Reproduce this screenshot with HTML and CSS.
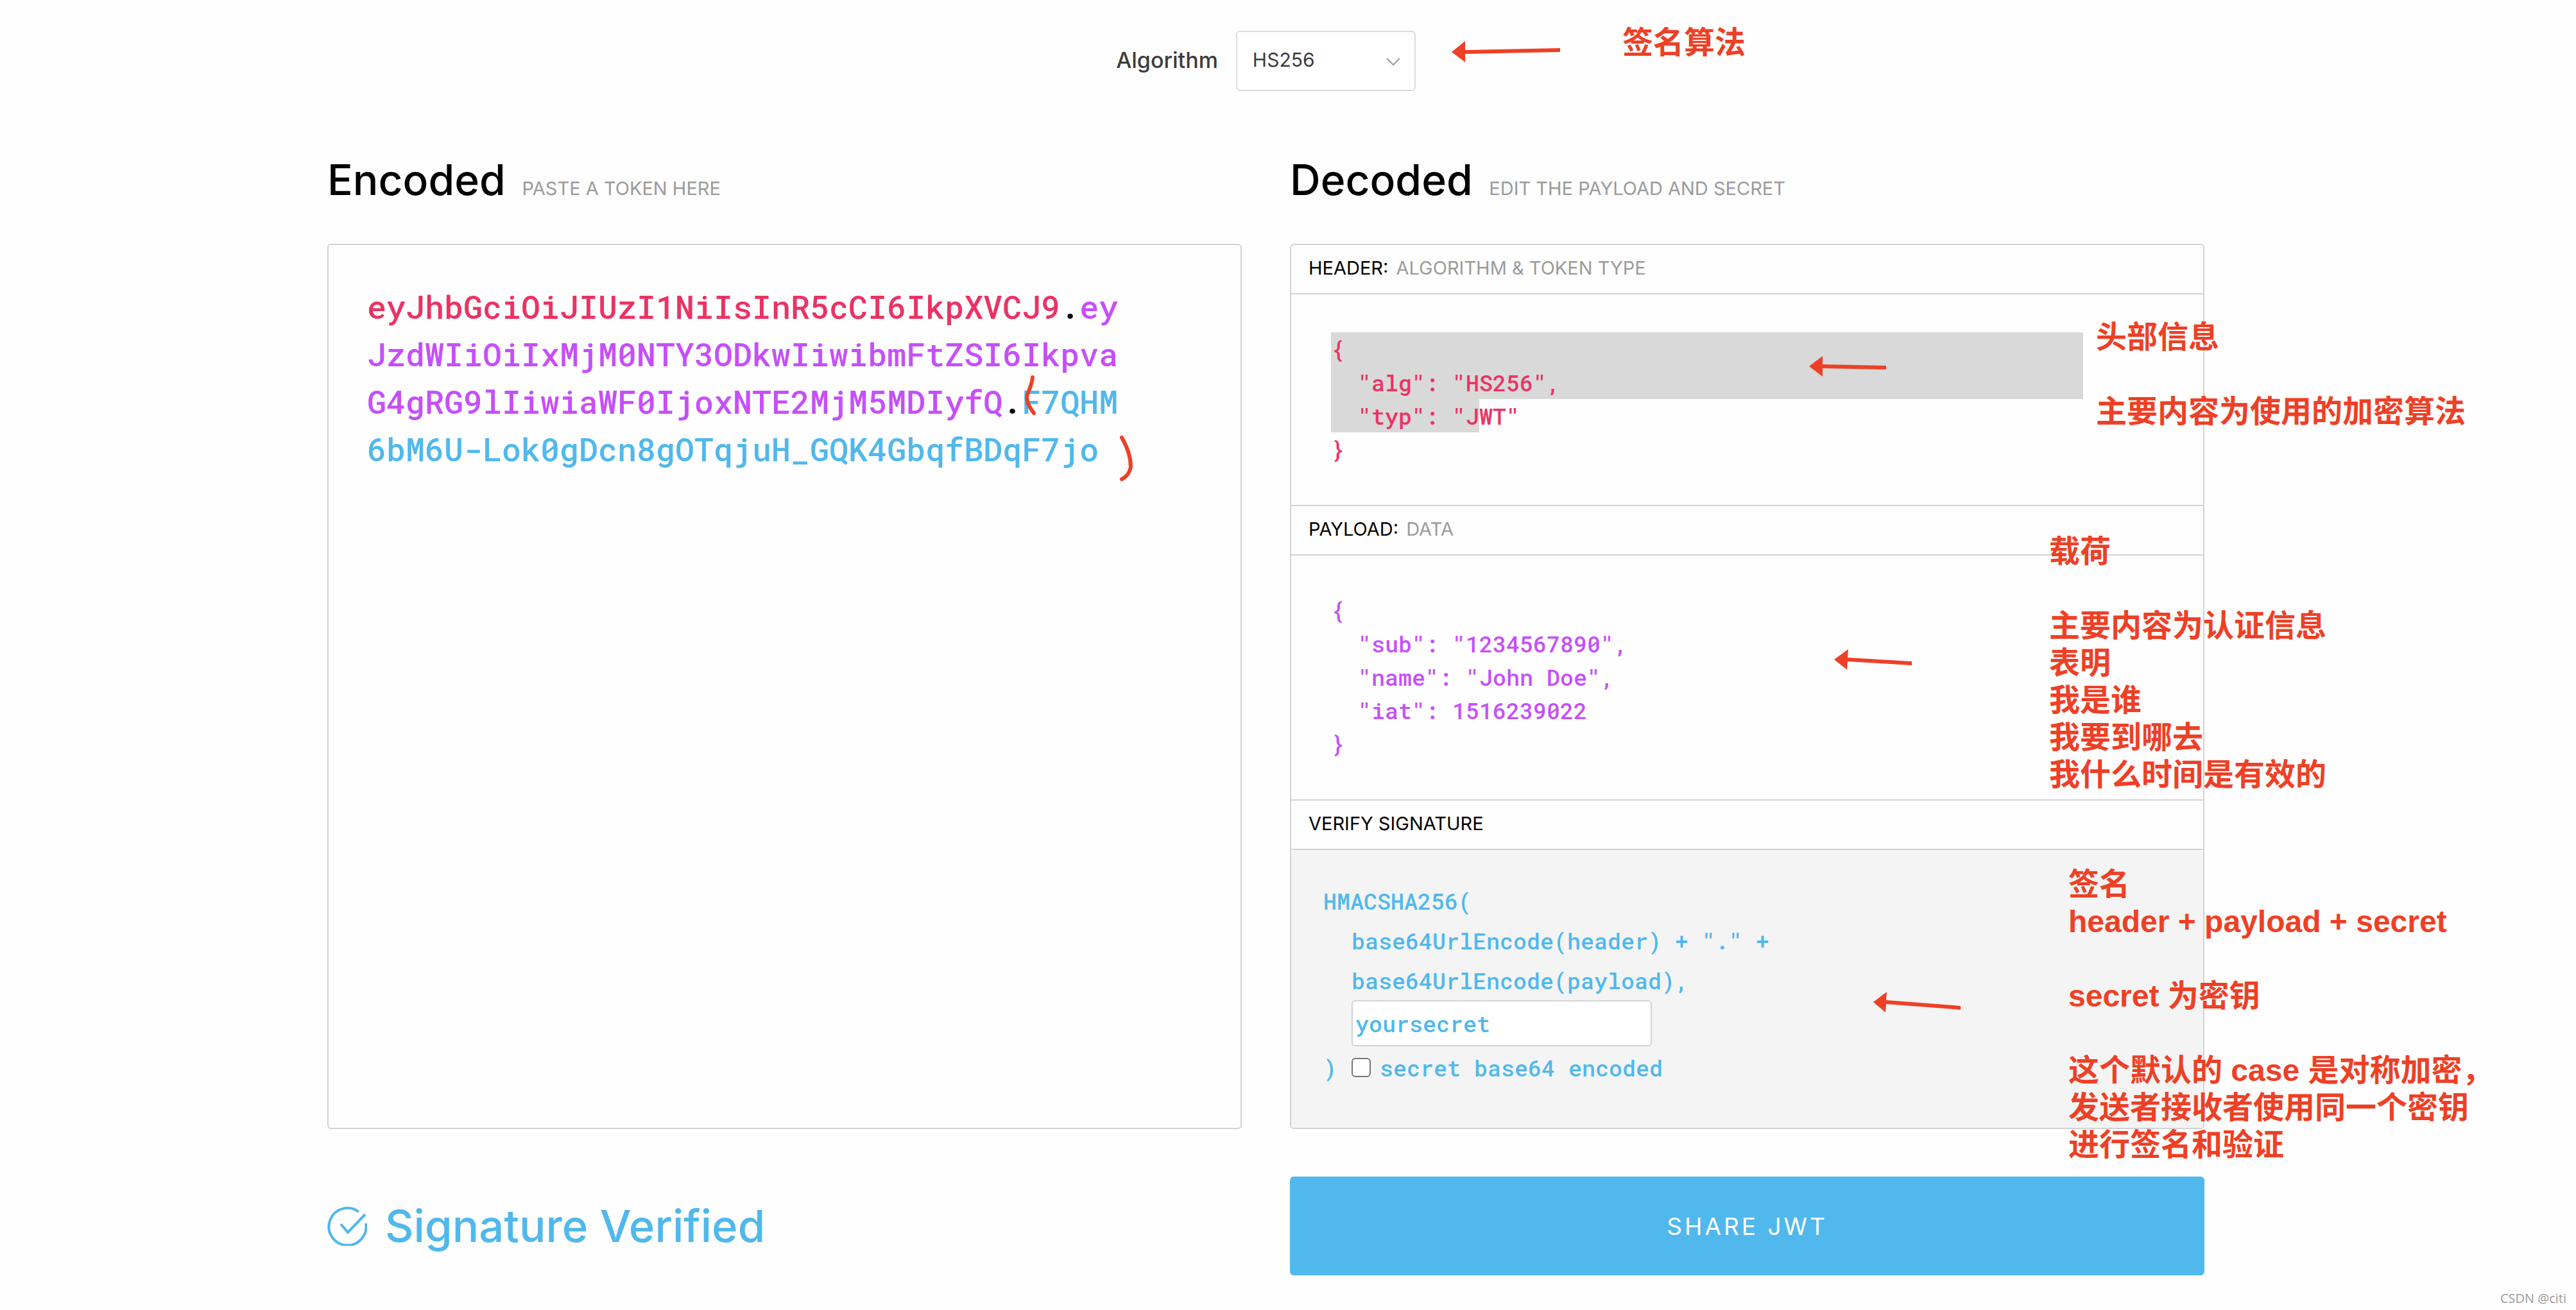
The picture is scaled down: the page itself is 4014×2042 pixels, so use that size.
FILE: index.html
```html
<!DOCTYPE html>
<html lang="zh-CN">

<head>
    <meta charset="UTF-8">
    <title>JWT Debugger</title>
    <link rel="stylesheet" href="styles.css">
</head>

<body>
    <div class="page">
        <div class="toolbar">
            <label for="algorithm">Algorithm</label>
            <div class="select-wrap">
                <select id="algorithm" name="algorithm">
                    <option value="HS256" selected>HS256</option>
                    <option value="HS384">HS384</option>
                    <option value="HS512">HS512</option>
                    <option value="RS256">RS256</option>
                </select>
                <svg class="chevron" viewBox="0 0 22 13"><path d="M1 1l10 10L21 1" /></svg>
            </div>
            <svg class="arrow arrow-algorithm" viewBox="0 0 169 34"><path d="M0 17L21 0V14L169 11V17L21 20V33Z" /></svg>
            <p class="note note-algorithm">签名算法</p>
        </div>

        <div class="columns">
            <div class="column">
                <h1 id="encoded-title">Encoded <small>PASTE A TOKEN HERE</small></h1>
                <div class="panel token" contenteditable="true" role="textbox" spellcheck="false" aria-labelledby="encoded-title"><span class="red">eyJhbGciOiJIUzI1NiIsInR5cCI6IkpXVCJ9</span>.<span class="purple">ey<br>JzdWIiOiIxMjM0NTY3ODkwIiwibmFtZSI6Ikpva<br>G4gRG9lIiwiaWF0IjoxNTE2MjM5MDIyfQ</span>.<span class="blue">F7QHM<br>6bM6U-Lok0gDcn8gOTqjuH_GQK4GbqfBDqF7jo</span><svg class="mark mark-open" viewBox="0 0 22 66"><path d="M14 5C13 19 6 28 5 36C5 46 11 54 16 61" /></svg><svg class="mark mark-close" viewBox="0 0 26 76"><path d="M6 6C14 20 20 36 20 52C18 62 12 68 6 71" /></svg></div>
            </div>

            <div class="column">
                <h1>Decoded <small>EDIT THE PAYLOAD AND SECRET</small></h1>
                <div class="panel">
                    <section class="part">
                        <h2>HEADER: <span>ALGORITHM &amp; TOKEN TYPE</span></h2>
                        <pre class="code red"><span class="selected line">{</span><span class="selected line">  "alg": "HS256",</span><span class="line"><span class="selected">  "typ": "J</span>WT"</span><span class="line">}</span></pre>
                        <svg class="arrow arrow-header" viewBox="0 0 120 34"><path d="M0 16L21 0V13L120 15V21L21 19V32Z" /></svg>
                        <p class="note note-header">头部信息<br><br>主要内容为使用的加密算法</p>
                    </section>
                    <section class="part">
                        <h2>PAYLOAD: <span>DATA</span></h2>
                        <pre class="code purple"><span class="line">{</span><span class="line">  "sub": "1234567890",</span><span class="line">  "name": "John Doe",</span><span class="line">  "iat": 1516239022</span><span class="line">}</span></pre>
                        <svg class="arrow arrow-payload" viewBox="0 0 121 34"><path d="M0 16L22 0L21 13L121 19V25L21 19L20 32Z" /></svg>
                        <p class="note note-payload">载荷<br><br>主要内容为认证信息<br>表明<br>我是谁<br>我要到哪去<br>我什么时间是有效的</p>
                    </section>
                    <section class="part">
                        <h2>VERIFY SIGNATURE</h2>
                        <div class="signature blue">
                            <div>HMACSHA256(</div>
                            <div class="indent">base64UrlEncode(header) + "." +</div>
                            <div class="indent">base64UrlEncode(payload),</div>
                            <div class="indent"><input class="secret" type="text" name="secret" value="yoursecret" aria-label="secret"></div>
                            <div class="encoded-row">
                                <span class="close">)</span>
                                <input id="base64" type="checkbox" name="base64">
                                <label for="base64">secret base64 encoded</label>
                            </div>
                        </div>
                        <svg class="arrow arrow-signature" viewBox="0 0 136 34"><path d="M0 16L21 0L20 13L136 22V28L20 19L19 32Z" /></svg>
                        <p class="note note-signature">签名<br>header + payload + secret<br><br>secret 为密钥<br><br>这个默认的 case 是对称加密，<br>发送者接收者使用同一个密钥<br>进行签名和验证</p>
                    </section>
                </div>
            </div>

            <div class="status">
                <svg class="check" viewBox="0 0 62 62"><path d="M49 9A29 29 0 1 0 60 27M21 28L32 41L59 13" /></svg>
                Signature Verified
            </div>
            <button class="share" type="button">SHARE JWT</button>
        </div>
    </div>
    <div class="watermark">CSDN @citi</div>
</body>

</html>
```
FILE: styles.css
```css
* {
    box-sizing: border-box;
}

body {
    position: relative;
    min-height: 100vh;
    margin: 0;
    background-color: #fefefe;
    color: #000;
    font-family: Inter, Roboto, sans-serif;
}

.page {
    padding: 48px 579px 0 510px;
}

h1,
h2,
p,
pre {
    margin: 0;
}

.toolbar {
    position: relative;
    display: flex;
    justify-content: center;
    align-items: center;
    gap: 28px;
    margin-bottom: 98px;
    color: #3c3c3c;
    font-size: 34px;
    font-weight: 500;
}

.toolbar label {
    padding-bottom: 4px;
}

.select-wrap {
    position: relative;
}

select {
    display: block;
    width: 280px;
    height: 94px;
    padding: 0 24px 4px;
    border: 2px solid #dcdcdc;
    border-radius: 6px;
    background-color: #fff;
    color: #3c3c3c;
    font-family: inherit;
    font-size: 30px;
    appearance: none;
}

.chevron {
    position: absolute;
    top: 42px;
    right: 24px;
    width: 22px;
    fill: none;
    stroke: #9b9b9b;
    stroke-width: 2;
}

.columns {
    display: grid;
    grid-template-columns: 1fr 1fr;
    column-gap: 75px;
    row-gap: 74px;
}

.column {
    display: flex;
    flex-direction: column;
}

h1 {
    margin-bottom: 60px;
    font-size: 66px;
    font-weight: 500;
    line-height: 80px;
}

h1 small {
    margin-left: 8px;
    color: #9b9b9b;
    font-size: 29px;
    font-weight: 400;
    line-height: 30px;
}

.panel {
    position: relative;
    flex: 1;
    border: 2px solid #d3d3d3;
    border-radius: 6px;
}

.token {
    padding: 59px 60px;
    font-family: "Roboto Mono", "DejaVu Sans Mono", monospace;
    font-size: 50px;
    font-weight: 500;
    line-height: 74px;
}

.red {
    color: #eb3363;
}

.purple {
    color: #c64ffa;
}

.blue {
    color: #50b8ec;
}

.part {
    position: relative;
}

.part + .part {
    border-top: 2px solid #d3d3d3;
}

h2 {
    padding: 0 27px 3px;
    border-bottom: 2px solid #d3d3d3;
    font-size: 29px;
    font-weight: 400;
    line-height: 72px;
}

h2 span {
    margin-left: 4px;
    color: #9b9b9b;
}

.code,
.signature {
    font-family: "Roboto Mono", "DejaVu Sans Mono", monospace;
    font-size: 35px;
    font-weight: 500;
}

.code {
    padding: 59px 187px 61px 62px;
    line-height: 52px;
}

.line {
    display: block;
}

.selected {
    background-color: #d9d9d9;
}

.line .selected {
    display: inline-block;
}

.signature {
    padding: 48px 50px 63px;
    border-radius: 6px;
    background-color: #f4f4f4;
    line-height: 62px;
}

.indent {
    padding-left: 44px;
    white-space: pre;
}

.secret {
    display: block;
    width: 468px;
    height: 72px;
    margin-bottom: 2px;
    padding: 0 4px;
    border: 2px solid #d3d3d3;
    border-radius: 6px;
    background-color: #fff;
    color: inherit;
    font: inherit;
}

.encoded-row {
    display: flex;
    align-items: center;
}

.close {
    width: 44px;
}

input[type="checkbox"] {
    width: 30px;
    height: 30px;
    margin: 0 14px 0 0;
    border: 2px solid #767676;
    border-radius: 6px;
    background-color: #fff;
    appearance: none;
}

.status {
    display: flex;
    align-items: center;
    gap: 28px;
    color: #50b8ec;
    font-size: 69px;
    font-weight: 500;
}

.check {
    width: 62px;
    fill: none;
    stroke: currentColor;
    stroke-width: 4;
}

.share {
    height: 154px;
    border: none;
    border-radius: 6px;
    background-color: #50b8ec;
    color: #fff;
    font-family: inherit;
    font-size: 37px;
    letter-spacing: 4px;
    cursor: pointer;
}

/* hand-drawn notes over the page */
.note,
.arrow,
.mark {
    position: absolute;
}

.note {
    color: #ee4026;
    font-family: "Liberation Sans", "Noto Sans CJK SC", sans-serif;
    font-size: 48px;
    font-weight: 700;
    line-height: 58px;
    white-space: nowrap;
}

.arrow {
    height: 34px;
    fill: #ee4026;
}

.mark {
    fill: none;
    stroke: #ee4026;
    stroke-width: 6;
    stroke-linecap: round;
}

.arrow-algorithm {
    top: 16px;
    left: 1752px;
}

.note-algorithm {
    top: -10px;
    left: 2018px;
}

.mark-open {
    top: 201px;
    left: 1083px;
    width: 22px;
}

.mark-close {
    top: 294px;
    left: 1230px;
    width: 26px;
}

.arrow-header {
    top: 173px;
    left: 807px;
}

.note-header {
    top: 115px;
    left: 1254px;
}

.arrow-payload {
    top: 223px;
    left: 846px;
}

.note-payload {
    top: 42px;
    left: 1181px;
}

.arrow-signature {
    top: 298px;
    left: 907px;
}

.note-signature {
    top: 102px;
    left: 1211px;
}

.watermark {
    position: absolute;
    right: 15px;
    bottom: 6px;
    color: #9b9b9b;
    font-family: "Open Sans", "Noto Sans", sans-serif;
    font-size: 20px;
    line-height: 24px;
}
```
